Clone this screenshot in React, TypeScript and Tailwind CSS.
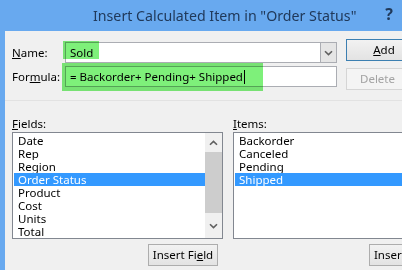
import React from 'react';

const font = { fontFamily: '"Noto Sans", "Open Sans", sans-serif' };

const fields = ['Date', 'Rep', 'Region', 'Order Status', 'Product', 'Cost', 'Units', 'Total'];
const items = ['Backorder', 'Canceled', 'Pending', 'Shipped'];

const Chevron = ({ up }: { up?: boolean }) => (
  <svg width="9" height="6" viewBox="0 0 9 6" className={up ? 'rotate-180' : ''}>
    <path d="M1 1.2 L4.5 4.6 L8 1.2" fill="none" stroke="#606060" strokeWidth="1.6" />
  </svg>
);

const Btn = ({ children, className = '' }: { children: React.ReactNode; className?: string }) => (
  <div
    className={`flex h-[22px] shrink-0 items-center justify-center border text-[11.5px] leading-[14px] ${className}`}
  >
    {children}
  </div>
);

const ListBox = ({
  rows,
  selected,
  scroll,
}: {
  rows: string[];
  selected: string;
  scroll?: boolean;
}) => (
  <div className="flex h-[107px] shrink-0 border border-[#828790] bg-white">
    <div className="flex-1 pt-px pl-px">
      {rows.map((r) => (
        <div
          key={r}
          className={`h-[13px] overflow-hidden pl-[4px] text-[11.5px] leading-[13px] ${
            r === selected ? 'bg-[#3399ff] text-white' : 'text-black'
          }`}
        >
          {r}
        </div>
      ))}
    </div>
    {scroll && (
      <div className="flex w-[17px] flex-col items-center bg-[#f0f0f0]">
        <div className="flex h-[19px] items-center justify-center">
          <Chevron up />
        </div>
        <div className="h-[61px] w-[17px] bg-[#cdcdcd]" />
        <div className="flex flex-1 items-center justify-center">
          <Chevron />
        </div>
      </div>
    )}
  </div>
);

export default function App() {
  return (
    <div className="flex h-[270px] w-[402px] flex-col overflow-hidden bg-[#f0f0f0]" style={font}>
      {/* title bar */}
      <div className="flex h-[31px] shrink-0 items-center bg-[#68a9ef]">
        <div className="pl-[93px] pt-px text-[14.2px] whitespace-nowrap text-[#20395a]">
          Insert Calculated Item in "Order Status"
        </div>
        <div className="ml-auto pr-[9px] pb-[4px] text-[16px] font-bold text-[#20395a]">?</div>
      </div>

      <div className="relative flex flex-1 flex-col border-l-[5px] border-[#68a9ef] text-[11.5px] text-black">
        {/* top section */}
        <div className="flex pt-[8px] pl-[7px]">
          <div className="flex w-[325px] shrink-0 flex-col pt-[3px]">
            <div className="flex h-[21px] items-center">
              <div className="w-[53px] shrink-0">
                <span className="underline">N</span>ame:
              </div>
              <div className="flex h-[21px] flex-1 items-center border border-[#abadb3] bg-white">
                <div className="flex-1 pl-[4px]">Sold</div>
                <div className="flex h-[19px] w-[16px] items-center justify-center border-l border-[#abadb3] bg-[#e5e5e5]">
                  <Chevron />
                </div>
              </div>
            </div>
            <div className="mt-[3px] flex h-[21px] items-center">
              <div className="w-[53px] shrink-0">
                For<span className="underline">m</span>ula:
              </div>
              <div className="flex h-[21px] flex-1 items-center border border-[#abadb3] bg-white pl-[4px]">
                = Backorder+ Pending+ Shipped
                <span className="ml-px h-[14px] w-px bg-black" />
              </div>
            </div>
          </div>
          <div className="ml-[9px] flex w-[76px] shrink-0 flex-col">
            <Btn className="border-[#3c7fb1] bg-gradient-to-b from-[#f2f2f2] to-[#e3e3e3]">
              <span className="underline">A</span>dd
            </Btn>
            <Btn className="mt-[7px] justify-start border-[#d5d5d5] bg-[#f4f4f4] pl-[13px] text-[#a3a3a3]">
              Delete
            </Btn>
          </div>
        </div>

        <div className="mt-[10px] h-px shrink-0 bg-[#e2e2e2]" />

        {/* lists */}
        <div className="flex gap-[10px] pt-[16px] pl-[7px]">
          <div className="flex w-[211px] shrink-0 flex-col">
            <div className="h-[15px] leading-[14px]">
              <span className="underline">F</span>ields:
            </div>
            <ListBox rows={fields} selected="Order Status" scroll />
            <div className="mt-[5px] flex justify-end pr-[5px]">
              <Btn className="w-[70px] border-[#adadad] bg-gradient-to-b from-[#f2f2f2] to-[#e3e3e3]">
                Insert Fi<span className="underline">e</span>ld
              </Btn>
            </div>
          </div>
          <div className="flex w-[211px] shrink-0 flex-col">
            <div className="h-[15px] leading-[14px]">
              <span className="underline">I</span>tems:
            </div>
            <ListBox rows={items} selected="Shipped" />
            <div className="mt-[5px] flex justify-end pr-[5px]">
              <Btn className="w-[70px] border-[#adadad] bg-gradient-to-b from-[#f2f2f2] to-[#e3e3e3]">
                Insert Item
              </Btn>
            </div>
          </div>
        </div>

        {/* highlighter marks */}
        <div className="pointer-events-none absolute top-[10px] left-[58px] h-[18px] w-[36px] bg-[#7ef07a] mix-blend-multiply" />
        <div className="pointer-events-none absolute top-[32px] left-[57px] h-[28px] w-[201px] bg-[#7ef07a] mix-blend-multiply" />
      </div>
    </div>
  );
}
